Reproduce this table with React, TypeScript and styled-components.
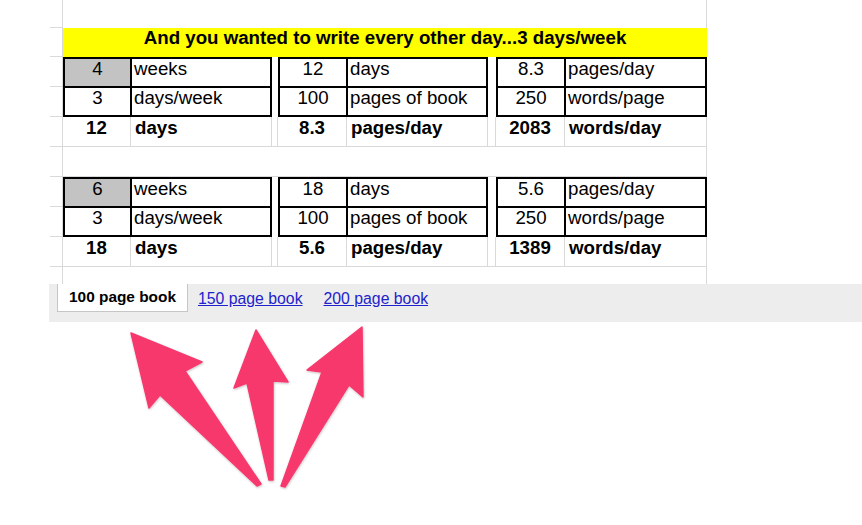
import React from "react";
import styled, { createGlobalStyle, css } from "styled-components";

const Global = createGlobalStyle`
  html, body { margin: 0; padding: 0; background: #fff; }
  body { font-family: "Liberation Sans", Arial, Helvetica, sans-serif; color: #000; }
`;

const GRID = "#d9d9d9";

const Page = styled.div`
  width: 862px;
  height: 525px;
  overflow: hidden;
  display: flex;
  flex-direction: column;
`;

const Sheet = styled.div`
  margin-left: 50px;
  display: grid;
  grid-template-columns: 13px 68px 141px 6px 69px 141px 8px 69px 142px;
  grid-template-rows: 28px 29px 30px 30px 30px 30px 30px 30px 30px 17px;
  width: 657px;
`;

type Place = { $col: string; $row: string };

const placed = css<Place>`
  grid-column: ${(p) => p.$col};
  grid-row: ${(p) => p.$row};
  box-sizing: border-box;
  min-height: 0;
  overflow: hidden;
`;

const RowHead = styled.div<Place & { $last?: boolean }>`
  ${placed}
  border-right: 1px solid ${GRID};
  border-bottom: ${(p) => (p.$last ? "none" : `1px solid ${GRID}`)};
`;

const Blank = styled.div<Place & { $bottom?: boolean }>`
  ${placed}
  border-right: 1px solid ${GRID};
  border-bottom: ${(p) => (p.$bottom ? `1px solid ${GRID}` : "none")};
`;

const Title = styled.div<Place>`
  ${placed}
  background: #ffff00;
  font-weight: bold;
  font-size: 18.7px;
  line-height: 18px;
  text-align: center;
  padding-top: 1px;
  white-space: nowrap;
`;

const Box = styled.div<Place & { $first?: boolean }>`
  ${placed}
  display: grid;
  grid-template-columns: ${(p) => (p.$first ? "65px" : "66px")} 1fr;
  grid-template-rows: 27px 27px;
  gap: 2px;
  padding: 2px;
  background: #000;
`;

const BoxCell = styled.div<{ $num?: boolean; $shade?: boolean }>`
  background: ${(p) => (p.$shade ? "#c3c3c3" : "#fff")};
  font-size: 18.7px;
  line-height: 18px;
  text-align: ${(p) => (p.$num ? "center" : "left")};
  padding: 1px 0 0 ${(p) => (p.$num ? "0" : "2px")};
  box-sizing: border-box;
  white-space: nowrap;
  overflow: hidden;
`;

const Gap = styled.div<Place>`
  ${placed}
`;

const SumCell = styled.div<Place & { $num?: boolean }>`
  ${placed}
  border-right: 1px solid ${GRID};
  border-bottom: 1px solid ${GRID};
  font-size: 18.7px;
  font-weight: bold;
  line-height: 18px;
  text-align: ${(p) => (p.$num ? "center" : "left")};
  padding: 2px 0 0 ${(p) => (p.$num ? "0" : "4px")};
  white-space: nowrap;
`;

const GapLine = styled.div<Place>`
  ${placed}
  border-right: 1px solid ${GRID};
  border-bottom: 1px solid ${GRID};
`;

const TabBar = styled.div`
  margin-left: 49px;
  height: 38px;
  background: #ededed;
  display: flex;
  align-items: flex-start;
  font-size: 15.8px;
`;

const ActiveTab = styled.div`
  margin-left: 8px;
  width: 131px;
  height: 28px;
  box-sizing: border-box;
  background: #fff;
  border: 1px solid #c6c6c6;
  border-top: none;
  font-weight: bold;
  font-size: 15.4px;
  display: flex;
  align-items: center;
  justify-content: center;
  padding-bottom: 1px;
`;

const TabLink = styled.a<{ $gap: number }>`
  margin-left: ${(p) => p.$gap}px;
  margin-top: 6px;
  color: #2222cc;
  text-decoration: underline;
  cursor: pointer;
  white-space: nowrap;
`;

const Arrows = styled.svg`
  display: block;
`;

const blocks: { first: number; rows: { n: string; l: string }[][] }[] = [
  {
    first: 3,
    rows: [
      [
        { n: "4", l: "weeks" },
        { n: "12", l: "days" },
        { n: "8.3", l: "pages/day" },
      ],
      [
        { n: "3", l: "days/week" },
        { n: "100", l: "pages of book" },
        { n: "250", l: "words/page" },
      ],
      [
        { n: "12", l: "days" },
        { n: "8.3", l: "pages/day" },
        { n: "2083", l: "words/day" },
      ],
    ],
  },
  {
    first: 7,
    rows: [
      [
        { n: "6", l: "weeks" },
        { n: "18", l: "days" },
        { n: "5.6", l: "pages/day" },
      ],
      [
        { n: "3", l: "days/week" },
        { n: "100", l: "pages of book" },
        { n: "250", l: "words/page" },
      ],
      [
        { n: "18", l: "days" },
        { n: "5.6", l: "pages/day" },
        { n: "1389", l: "words/day" },
      ],
    ],
  },
];

const boxCols = ["2 / span 2", "5 / span 2", "8 / span 2"];
const gapCols = ["4", "7"];
const sumCols = [
  ["2", "3"],
  ["5", "6"],
  ["8", "9"],
];

export default function App() {
  const rowHeads = Array.from({ length: 10 }, (_, i) => i + 1);
  return (
    <Page>
      <Global />
      <Sheet>
        {rowHeads.map((r) => (
          <RowHead key={`rh${r}`} $col="1" $row={String(r)} $last={r === 10} />
        ))}
        <Blank $col="2 / -1" $row="1" />
        <Title $col="2 / -1" $row="2">
          And you wanted to write every other day...3 days/week
        </Title>
        {blocks.map((blk, bi) => {
          const r = blk.first;
          return (
            <React.Fragment key={`b${bi}`}>
              {boxCols.map((col, ci) => (
                <Box key={`box${ci}`} $col={col} $row={`${r} / span 2`} $first={ci === 0}>
                  <BoxCell $num $shade={ci === 0}>{blk.rows[0][ci].n}</BoxCell>
                  <BoxCell>{blk.rows[0][ci].l}</BoxCell>
                  <BoxCell $num>{blk.rows[1][ci].n}</BoxCell>
                  <BoxCell>{blk.rows[1][ci].l}</BoxCell>
                </Box>
              ))}
              {gapCols.map((col) => (
                <Gap key={`g${col}`} $col={col} $row={`${r} / span 2`} />
              ))}
              {sumCols.map(([nc, lc], ci) => (
                <React.Fragment key={`s${ci}`}>
                  <SumCell $col={nc} $row={String(r + 2)} $num>
                    {blk.rows[2][ci].n}
                  </SumCell>
                  <SumCell $col={lc} $row={String(r + 2)}>
                    {blk.rows[2][ci].l}
                  </SumCell>
                </React.Fragment>
              ))}
              {gapCols.map((col) => (
                <GapLine key={`gl${col}`} $col={col} $row={String(r + 2)} />
              ))}
            </React.Fragment>
          );
        })}
        <Blank $col="2 / -1" $row="6" $bottom />
        <Blank $col="2 / -1" $row="10" />
      </Sheet>
      <TabBar>
        <ActiveTab>100 page book</ActiveTab>
        <TabLink $gap={10}>150 page book</TabLink>
        <TabLink $gap={21}>200 page book</TabLink>
      </TabBar>
      <Arrows width="862" height="203" viewBox="0 322 862 203">
        <defs>
          <filter id="sh" x="-20%" y="-20%" width="140%" height="140%">
            <feDropShadow dx="0.5" dy="1" stdDeviation="1" floodColor="#000" floodOpacity="0.25" />
          </filter>
        </defs>
        <g fill="#f7386d" stroke="#f7386d" strokeWidth="1.5" strokeLinejoin="round" filter="url(#sh)">
          <polygon points="131,333 202,362 185,371 261,484 257,486 160,395 149,408" />
          <polygon points="256,330 288,382 273,381 273,480 269,480 247,383 234,388" />
          <polygon points="362,327 363,397 349,385 285,487 281,486 322,372 307,370" />
        </g>
      </Arrows>
    </Page>
  );
}
